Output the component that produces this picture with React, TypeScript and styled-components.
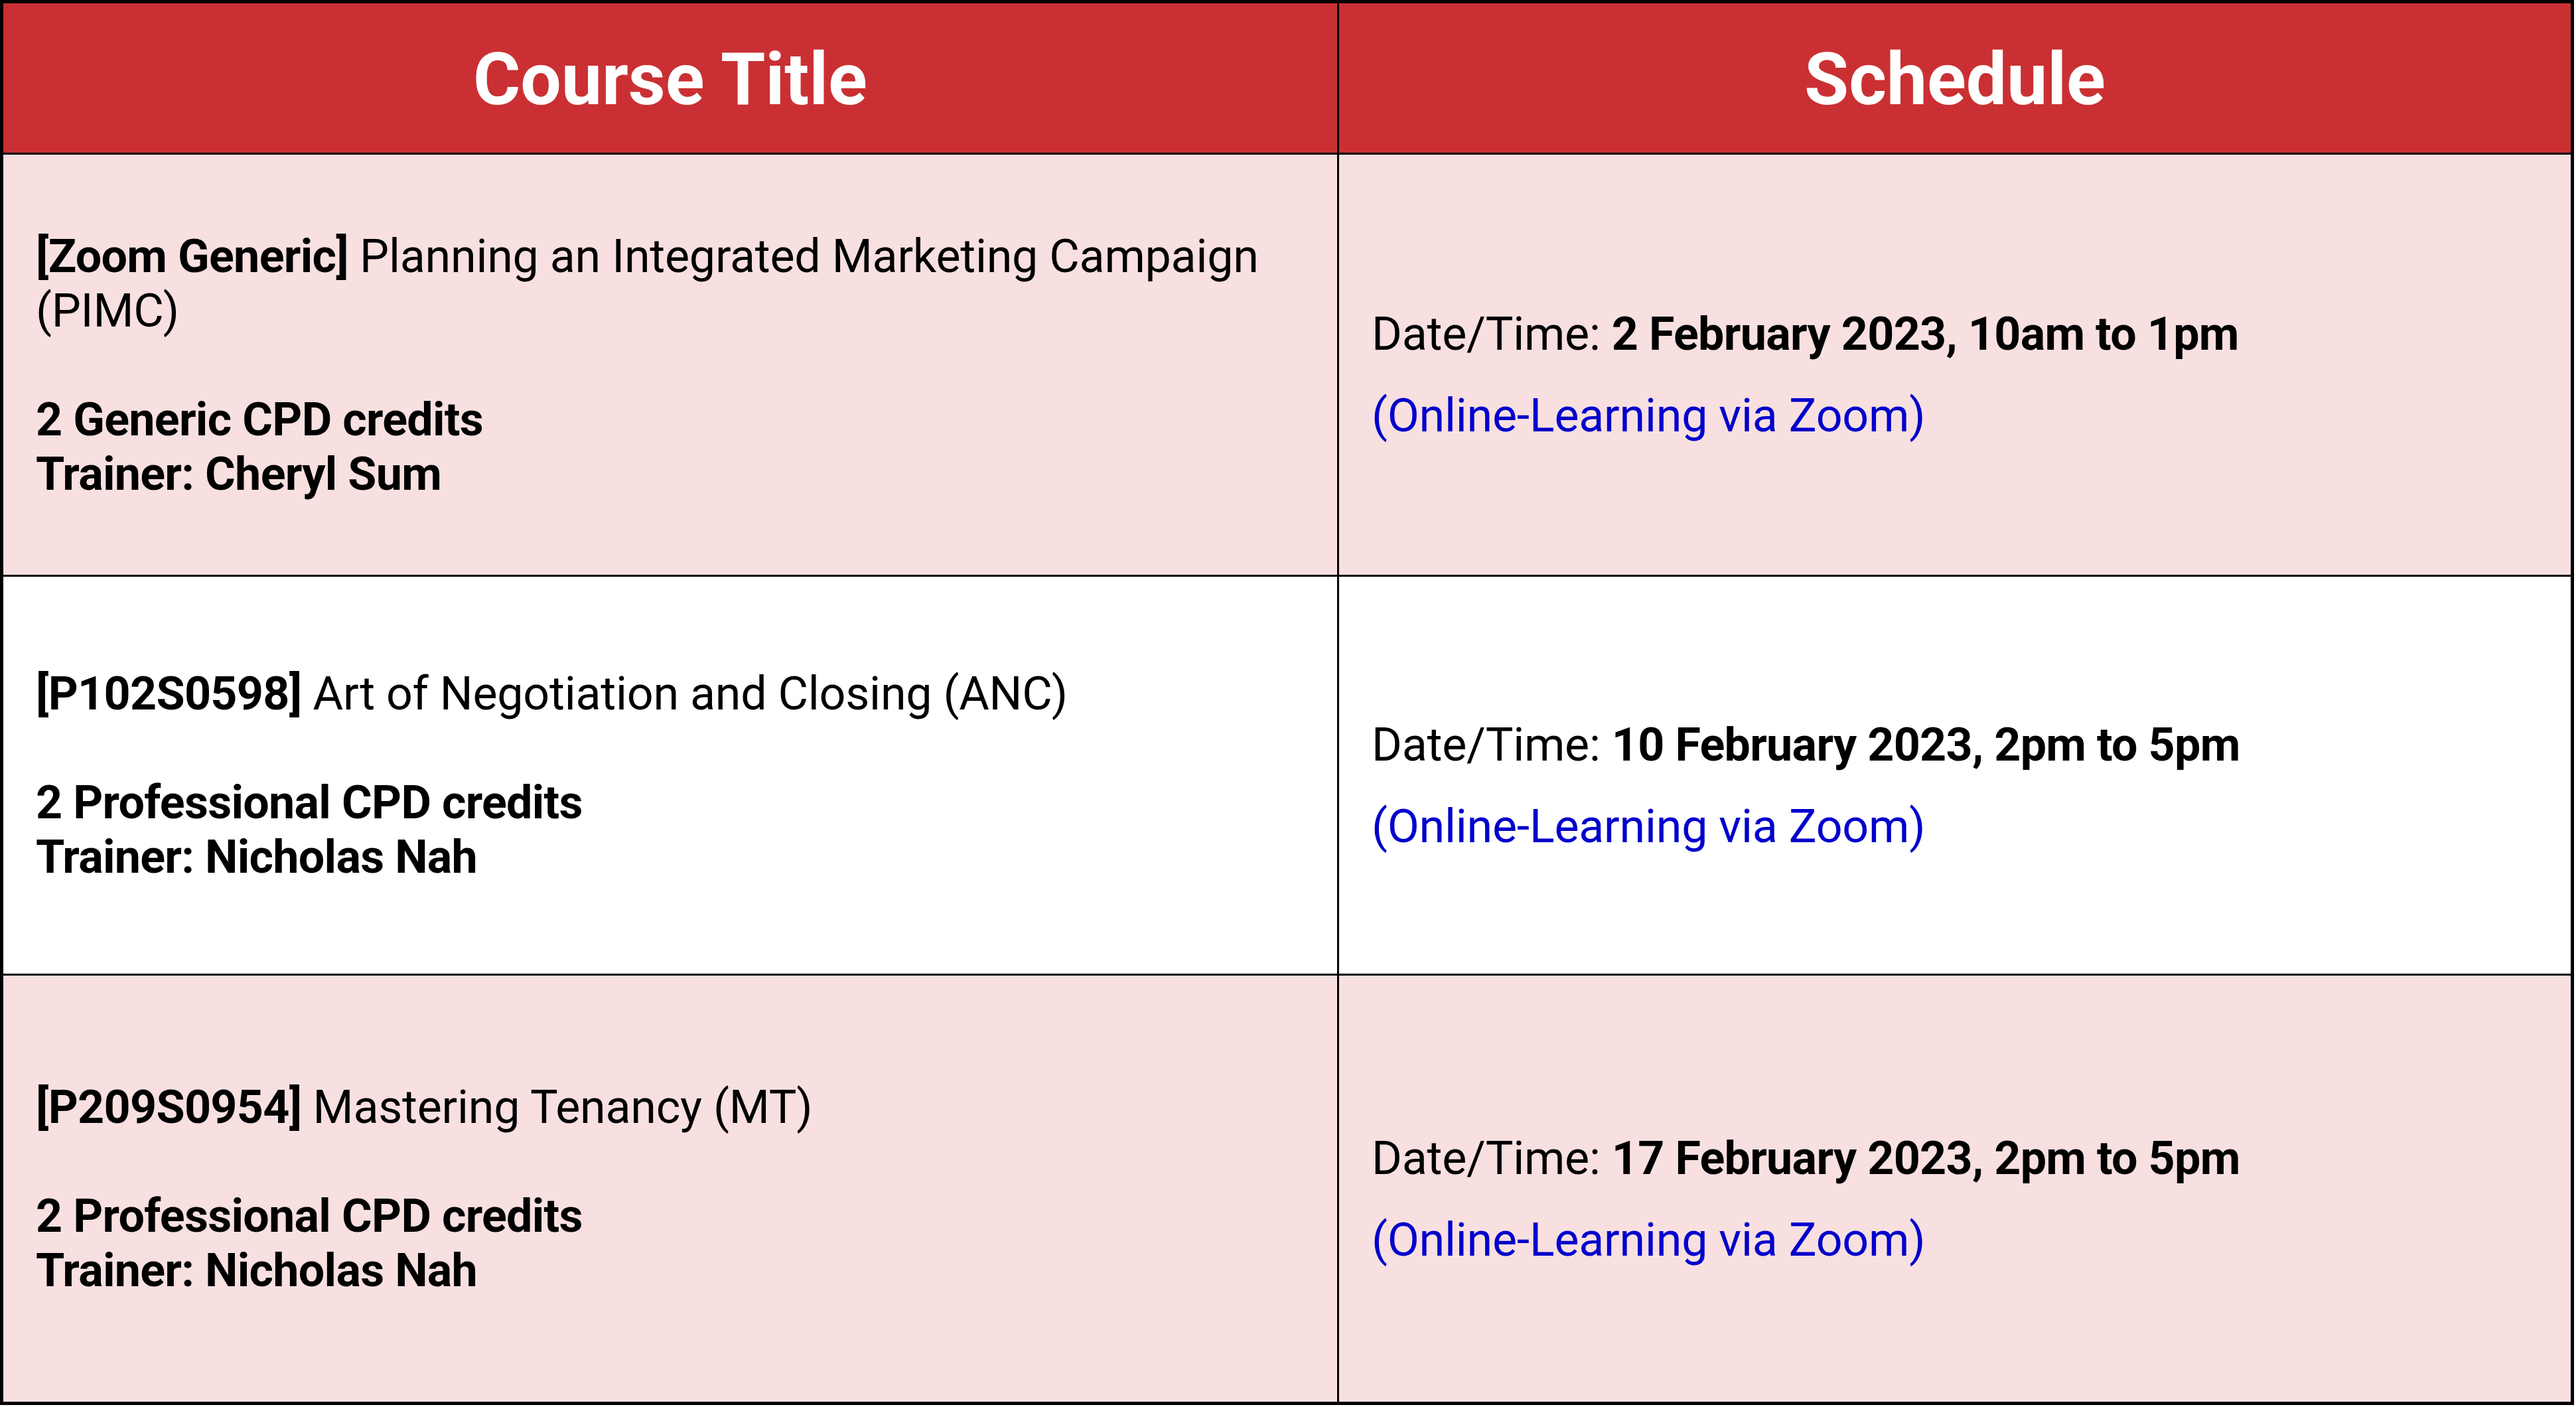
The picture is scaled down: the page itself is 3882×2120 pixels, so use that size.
import React from "react";
import styled, { createGlobalStyle } from "styled-components";

const GlobalStyle = createGlobalStyle`
  html, body {
    margin: 0;
    padding: 0;
    background: #ffffff;
  }
  body {
    font-family: Roboto, "Liberation Sans", Arial, sans-serif;
    color: #000;
  }
`;

const Table = styled.div`
  display: grid;
  grid-template-columns: 2010px 1856px;
  grid-template-rows: 225px 633px 598px 642px;
  column-gap: 3px;
  row-gap: 3px;
  width: max-content;
  background: #000;
  border: 5px solid #000;
`;

const HeadCell = styled.div`
  background: #ca3033;
  color: #fff;
  font-family: Roboto, "Liberation Sans", Arial, sans-serif;
  font-weight: 700;
  font-size: 109px;
  display: flex;
  align-items: center;
  justify-content: center;
  padding-top: 4px;
  box-sizing: border-box;
`;

const Cell = styled.div<{ $tint: boolean; $shift?: number }>`
  background: ${(p) => (p.$tint ? "#f8e0e0" : "#ffffff")};
  display: flex;
  flex-direction: column;
  justify-content: center;
  padding: 0 50px ${(p) => p.$shift ?? 0}px 49px;
  box-sizing: border-box;
  font-size: 70px;
  line-height: 82px;
  letter-spacing: -0.25px;
`;

const Para = styled.p<{ $gap?: number }>`
  margin: ${(p) => p.$gap ?? 0}px 0 0 0;
`;

const Bold = styled.b`
  font-weight: 700;
  letter-spacing: -0.7px;
`;

const Link = styled.span`
  color: #0000cc;
`;

type Course = {
  code: string;
  title: string;
  credits: string;
  trainer: string;
  date: string;
};

const courses: Course[] = [
  {
    code: "[Zoom Generic]",
    title: "Planning an Integrated Marketing Campaign (PIMC)",
    credits: "2 Generic CPD credits",
    trainer: "Trainer: Cheryl Sum",
    date: "2 February 2023, 10am to 1pm",
  },
  {
    code: "[P102S0598]",
    title: "Art of Negotiation and Closing (ANC)",
    credits: "2 Professional CPD credits",
    trainer: "Trainer: Nicholas Nah",
    date: "10 February 2023, 2pm to 5pm",
  },
  {
    code: "[P209S0954]",
    title: "Mastering Tenancy (MT)",
    credits: "2 Professional CPD credits",
    trainer: "Trainer: Nicholas Nah",
    date: "17 February 2023, 2pm to 5pm",
  },
];

export default function App() {
  return (
    <>
      <GlobalStyle />
      <Table>
        <HeadCell>Course Title</HeadCell>
        <HeadCell>Schedule</HeadCell>
        {courses.map((c, i) => {
          const tint = i % 2 === 0;
          return (
            <React.Fragment key={c.code}>
              <Cell $tint={tint}>
                <Para>
                  <Bold>{c.code}</Bold> {c.title}
                </Para>
                <Para $gap={82}>
                  <Bold>{c.credits}</Bold>
                </Para>
                <Para>
                  <Bold>{c.trainer}</Bold>
                </Para>
              </Cell>
              <Cell $tint={tint} $shift={10}>
                <Para $gap={40}>
                  Date/Time: <Bold>{c.date}</Bold>
                </Para>
                <Para $gap={41}>
                  <Link>(Online-Learning via Zoom)</Link>
                </Para>
              </Cell>
            </React.Fragment>
          );
        })}
      </Table>
    </>
  );
}
